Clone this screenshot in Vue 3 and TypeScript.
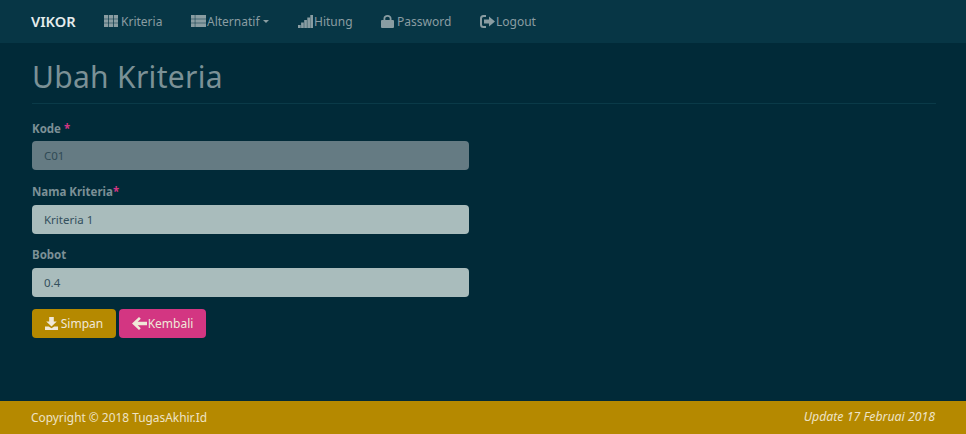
<script setup lang="ts">
interface NavItem { label: string; icon: string; caret?: boolean; gap: number }
const nav: NavItem[] = [
  { label: 'Kriteria', icon: 'grid', gap: 3 },
  { label: 'Alternatif', icon: 'list', caret: true, gap: 1 },
  { label: 'Hitung', icon: 'signal', gap: 1 },
  { label: 'Password', icon: 'lock', gap: 3 },
  { label: 'Logout', icon: 'logout', gap: 1 },
]
</script>

<template>
  <div class="page">
    <nav class="navbar">
      <span class="brand">VIKOR</span>
      <ul class="menu">
        <li v-for="item in nav" :key="item.label" class="menu-item" :class="'item-' + item.icon" :style="{ gap: item.gap + 'px' }">
          <svg v-if="item.icon === 'grid'" class="ico" width="14" height="12" viewBox="0 0 14 12" fill="currentColor">
            <path d="M0 0h4.200v3.700H0zM4.900 0h4.200v3.700H4.900zM9.800 0H14v3.700H9.800zM0 4.150h4.200v3.700H0zM4.900 4.150h4.200v3.700H4.900zM9.800 4.150H14v3.700H9.800zM0 8.300h4.200V12H0zM4.900 8.300h4.200V12H4.900zM9.800 8.300H14V12H9.800z" />
          </svg>
          <svg v-else-if="item.icon === 'list'" class="ico" width="15" height="12" viewBox="0 0 15 12" fill="currentColor">
            <path d="M0 0h3.800v3.700H0zM4.300 0H15v3.700H4.300zM0 4.150h3.800v3.700H0zM4.300 4.150H15v3.700H4.300zM0 8.300h3.800V12H0zM4.300 8.300H15V12H4.300z" />
          </svg>
          <svg v-else-if="item.icon === 'signal'" class="ico" width="15" height="13" viewBox="0 0 15 13" fill="currentColor">
            <path d="M0 10h2.700v3H0zM3.100 7.500h2.700V13H3.100zM6.200 5h2.700v8H6.200zM9.300 2.500H12V13H9.300zM12.300 0H15v13h-2.700z" />
          </svg>
          <svg v-else-if="item.icon === 'lock'" class="ico" width="13" height="13" viewBox="0 0 13 13" fill="currentColor">
            <path fill-rule="evenodd" d="M2.500 5V3.500C2.500 1.400 4.200 0 6.500 0s4 1.400 4 3.500V5h1.500a1 1 0 0 1 1 1v6a1 1 0 0 1-1 1H1a1 1 0 0 1-1-1V6a1 1 0 0 1 1-1zM4.300 5h4.400V3.500c0-1.100-1-1.800-2.200-1.800s-2.200.7-2.200 1.800z" />
          </svg>
          <svg v-else class="ico" width="15" height="13" viewBox="0 0 15 13" fill="currentColor">
            <path d="M6 0H3.500A3.500 3.500 0 0 0 0 3.500v6A3.500 3.500 0 0 0 3.500 13H6v-2H3.600A1.600 1.600 0 0 1 2 9.400V3.600A1.600 1.600 0 0 1 3.600 2H6z" />
            <path d="M9 1.500 15 6.500 9 11.500V8.500H4V4.500h5z" />
          </svg>
          <span>{{ item.label }}</span>
          <span v-if="item.caret" class="caret"></span>
        </li>
      </ul>
    </nav>

    <main class="content">
      <h1 class="title">Ubah Kriteria</h1>
      <form class="form" @submit.prevent>
        <div class="field">
          <label class="label">Kode <span class="req">*</span></label>
          <input class="input" value="C01" readonly />
        </div>
        <div class="field">
          <label class="label">Nama Kriteria<span class="req">*</span></label>
          <input class="input light" value="Kriteria 1" />
        </div>
        <div class="field">
          <label class="label">Bobot</label>
          <input class="input light" value="0.4" />
        </div>
        <div class="actions">
          <button class="btn gold" type="submit">
            <svg width="13" height="13" viewBox="0 0 13 13" fill="currentColor">
              <path d="M4.200 0h4.600v4.500h3L6.500 9.500 1.200 4.500h3zM0 9.500h3.700l2.800 1.800 2.800-1.800H13V13H0z" />
            </svg>
            <span>Simpan</span>
          </button>
          <button class="btn pink" type="button">
            <svg width="15" height="13" viewBox="0 0 15 13" fill="currentColor">
              <path d="M7 0 8.800 1.800 5.700 4.700H15v3.600H5.700l3.100 2.900L7 13 0 6.500z" />
            </svg>
            <span>Kembali</span>
          </button>
        </div>
      </form>
    </main>

    <footer class="footer">
      <span class="copy">Copyright © 2018 TugasAkhir.Id</span>
      <em class="update">Update 17 Februai 2018</em>
    </footer>
  </div>
</template>

<style>
html, body { margin: 0; padding: 0; background: #002b36; }
</style>

<style scoped>
.page {
  width: 966px;
  height: 434px;
  display: flex;
  flex-direction: column;
  background: #012a38;
  font-family: "Noto Sans", "Open Sans", sans-serif;
  overflow: hidden;
}
.navbar {
  height: 43px;
  flex: none;
  display: flex;
  align-items: center;
  padding-left: 31px;
  padding-bottom: 1px;
  box-sizing: border-box;
  background: #073645;
}
.brand {
  color: #e4ecec;
  font-size: 14.600px;
  font-weight: 600;
  width: 73px;
}
.menu {
  list-style: none;
  margin: 0;
  padding: 0;
  display: flex;
  align-items: center;
}
.menu-item {
  display: flex;
  align-items: center;
  color: #8a9da2;
  font-size: 12px;
}
.item-grid { width: 87px; }
.item-list { width: 107px; }
.item-signal { width: 83px; }
.item-lock { width: 99px; }
.caret {
  width: 0;
  height: 0;
  margin-left: 2px;
  border-left: 3.500px solid transparent;
  border-right: 3.500px solid transparent;
  border-top: 3.500px solid #8a9da2;
}
.content {
  flex: 1;
  padding: 0 30px 0 32px;
}
.title {
  margin: 0;
  height: 60px;
  line-height: 68px;
  box-sizing: content-box;
  border-bottom: 1px solid #0a3a48;
  color: #7b9196;
  font-size: 30px;
  font-weight: 400;
  letter-spacing: 0.3px;
}
.form { width: 437px; padding-top: 17px; }
.field { margin-bottom: 13px; }
.field:first-child { margin-bottom: 14px; }
.field:nth-child(3) { margin-bottom: 12px; }
.label {
  display: block;
  color: #7c9096;
  font-size: 11.500px;
  font-weight: 700;
  line-height: 16px;
  margin-bottom: 5px;
}
.field:first-child .label { margin-bottom: 4px; }
.req { color: #d33682; }
.input {
  display: block;
  box-sizing: border-box;
  width: 100%;
  height: 29px;
  padding: 0 12px;
  border: none;
  border-radius: 4px;
  outline: none;
  background: #657b83;
  color: #2f4a55;
  font-family: inherit;
  font-size: 11.500px;
}
.input.light {
  background: #a9bcbc;
  color: #34505c;
}
.actions { display: flex; gap: 3px; }
.btn {
  height: 29px;
  display: flex;
  align-items: center;
  justify-content: center;
  padding: 0;
  border: none;
  border-radius: 4px;
  color: #f0e8d8;
  font-family: inherit;
  font-size: 12px;
}
.gold { width: 84px; gap: 3px; background: #b58900; }
.pink { width: 87px; gap: 1px; background: #d33682; }
.footer {
  height: 33px;
  flex: none;
  box-sizing: border-box;
  display: flex;
  align-items: center;
  justify-content: space-between;
  padding: 0 31px 2px;
  background: #b58900;
  color: #eee3c6;
  font-size: 11.900px;
}
.update { font-style: italic; font-size: 12.300px; }
</style>
